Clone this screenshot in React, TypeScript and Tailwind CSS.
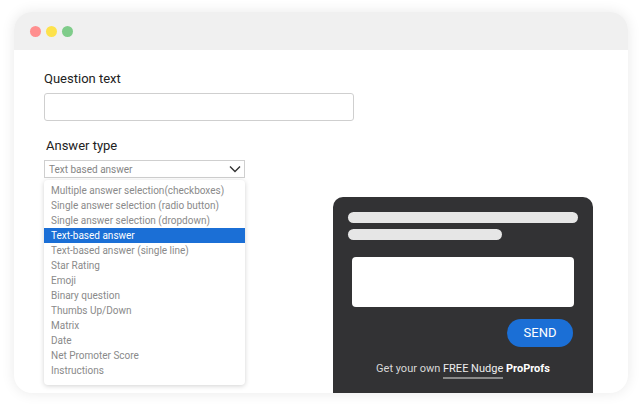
import React from 'react';

const options = [
  'Multiple answer selection(checkboxes)',
  'Single answer selection (radio button)',
  'Single answer selection (dropdown)',
  'Text-based answer',
  'Text-based answer (single line)',
  'Star Rating',
  'Emoji',
  'Binary question',
  'Thumbs Up/Down',
  'Matrix',
  'Date',
  'Net Promoter Score',
  'Instructions',
];

const App: React.FC = () => {
  const selected = 'Text-based answer';

  return (
    <div className="w-[642px] h-[409px] bg-white pt-[12px] pl-[14px] font-['Roboto',sans-serif]">
      <div className="w-[614px] h-[381px] rounded-[18px] bg-white overflow-hidden shadow-[0_0_14px_rgba(0,0,0,0.09)] flex flex-col">
        {/* title bar */}
        <div className="h-[38px] bg-[#f0f0f0] flex items-center gap-[5px] pl-[16px] shrink-0">
          <span className="w-[11px] h-[11px] rounded-full bg-[#ff8f8f]" />
          <span className="w-[11px] h-[11px] rounded-full bg-[#fde24c]" />
          <span className="w-[11px] h-[11px] rounded-full bg-[#7fcc8a]" />
        </div>

        <div className="flex flex-1 min-h-0">
          {/* form */}
          <div className="w-[280px] ml-[30px] pt-[21px] shrink-0">
            <div className="text-[13px] leading-[16px] text-[#222]">Question text</div>
            <div className="mt-[6px] h-[28px] w-[310px] rounded-[3px] border border-[#cfcfcf]" />

            <div className="mt-[17px] ml-[2px] text-[13px] leading-[16px] text-[#222]">Answer type</div>
            <div className="relative mt-[6px] w-[201px]">
              <div className="h-[18px] border border-[#cfcfcf] flex items-center justify-between pl-[4px] pr-[3px]">
                <span className="text-[10px] text-[#858585]">Text based answer</span>
                <svg width="12" height="8" viewBox="0 0 12 8" fill="none" stroke="#333" strokeWidth="1.4">
                  <path d="M1 1.5l5 5 5-5" />
                </svg>
              </div>
              <ul className="absolute left-0 top-[20px] w-[201px] bg-white rounded-[4px] shadow-[0_1px_5px_rgba(0,0,0,0.18)] pt-[3px] pb-[7px]">
                {options.map((o) => (
                  <li
                    key={o}
                    className={
                      o === selected
                        ? 'h-[15px] leading-[15px] px-[7px] text-[10px] bg-[#1b6fd6] text-white'
                        : 'h-[15px] leading-[15px] px-[7px] text-[10px] text-[#8a8a8a]'
                    }
                  >
                    {o}
                  </li>
                ))}
              </ul>
            </div>
          </div>

          {/* nudge preview */}
          <div className="ml-auto mr-[35px] self-end w-[260px] h-[196px] bg-[#323234] rounded-t-[10px] px-[15px] pt-[15px]">
            <div className="h-[11px] w-[230px] rounded-full bg-[#e6e6e6]" />
            <div className="mt-[6px] h-[11px] w-[154px] rounded-full bg-[#e6e6e6]" />
            <div className="mt-[17px] mx-[4px] h-[50px] rounded-[4px] bg-white" />
            <div className="flex justify-end mr-[5px] mt-[12px]">
              <button className="w-[66px] h-[28px] rounded-full bg-[#1b6fd6] text-white text-[13px]">SEND</button>
            </div>
            <div className="mt-[15px] text-center text-[11px] leading-[14px] text-[#d8d8d8]">
              Get your own{' '}
              <span className="inline-block border-b-2 border-[#8a8a8a] pb-[1px] text-[#eee]">FREE Nudge</span>{' '}
              <span className="font-bold text-white">ProProfs</span>
            </div>
          </div>
        </div>
      </div>
    </div>
  );
};

export default App;
